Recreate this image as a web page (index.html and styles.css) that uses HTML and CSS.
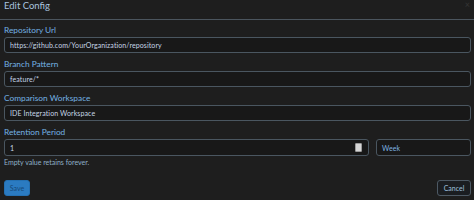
FILE: index.html
```html
<!DOCTYPE html>
<html lang="en">
<head>
    <meta charset="UTF-8">
    <title>Edit Config</title>
    <link rel="stylesheet" href="styles.css">
</head>
<body>
    <div class="dialog">
        <div class="dialog-header">
            <h1>Edit Config</h1>
            <span class="close">&times;</span>
        </div>

        <form class="dialog-body">
            <label class="field-label">Repository Url</label>
            <div class="input">https://github.com/YourOrganization/repository</div>

            <label class="field-label">Branch Pattern</label>
            <div class="input">feature/*</div>

            <label class="field-label">Comparison Workspace</label>
            <div class="input">IDE Integration Workspace</div>

            <label class="field-label">Retention Period</label>
            <div class="retention-row">
                <div class="input number">
                    <span>1</span>
                    <span class="spinner"></span>
                </div>
                <div class="input select">Week</div>
            </div>
            <p class="hint">Empty value retains forever.</p>

            <div class="actions">
                <button type="button" class="btn btn-primary">Save</button>
                <button type="button" class="btn btn-secondary">Cancel</button>
            </div>
        </form>
    </div>
</body>
</html>
```

FILE: styles.css
```css
body {
    margin: 0;
    background-color: #1e1e1e;
    font-family: Lato, "Noto Sans", sans-serif;
    width: 474px;
    height: 200px;
    overflow: hidden;
}
.dialog {
    display: flex;
    flex-direction: column;
}
.dialog-header {
    display: flex;
    justify-content: space-between;
    align-items: flex-start;
    height: 19px;
    padding: 0 4px;
    border-bottom: 1px solid #4b555e;
}
.dialog-header h1 {
    margin: 0;
    font-size: 9.5px;
    font-weight: normal;
    color: #a9c4de;
    line-height: 12px;
    margin-top: 0;
}
.close {
    color: #353535;
    font-size: 9px;
    line-height: 10px;
}
.dialog-body {
    display: flex;
    flex-direction: column;
    padding: 5px 3px 0 4px;
}
.field-label {
    color: #74b2e4;
    font-size: 8.3px;
    line-height: 10px;
    margin-bottom: 2px;
}
.input {
    display: flex;
    align-items: center;
    height: 14px;
    padding: 0 5px;
    border: 1px solid #4a5660;
    border-radius: 3px;
    background-color: #181818;
    color: #c6d6e6;
    font-size: 7px;
    letter-spacing: 0.1px;
    margin-bottom: 6px;
}
.retention-row {
    display: flex;
    gap: 7px;
}
.retention-row .input {
    margin-bottom: 2px;
    height: 15px;
}
.number {
    flex: 1;
    justify-content: space-between;
}
.spinner {
    width: 7px;
    height: 9px;
    background-color: #d6d6d6;
    border: 1px solid #9a9a9a;
    border-radius: 1px;
    box-sizing: border-box;
    margin-right: 1px;
}
.select {
    width: 83px;
    color: #7fb4e2;
}
.hint {
    margin: 0;
    color: #8fb0c8;
    font-size: 7px;
    line-height: 9px;
}
.actions {
    display: flex;
    justify-content: space-between;
    margin-top: 13px;
}
.btn {
    font-family: inherit;
    font-size: 7px;
    height: 16px;
    border-radius: 3px;
    padding: 0;
}
.btn-primary {
    background-color: #2b7bc1;
    border: 1px solid #2470b2;
    color: #164a7a;
    width: 26px;
}
.btn-secondary {
    background-color: #1a1d21;
    border: 1px solid #4d5964;
    color: #9fc0dc;
    width: 34px;
}
```
